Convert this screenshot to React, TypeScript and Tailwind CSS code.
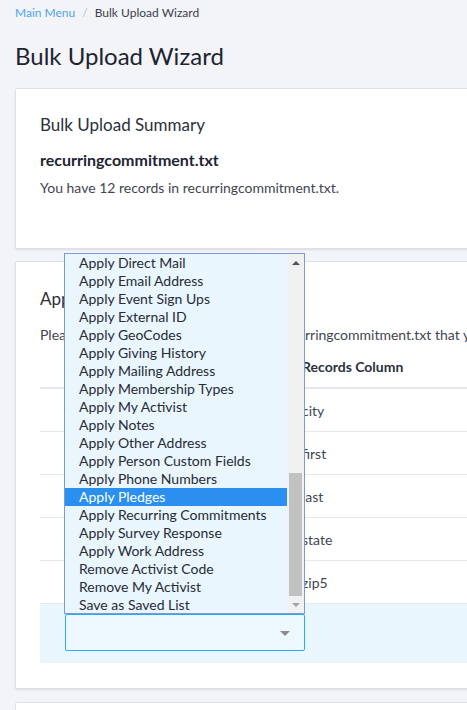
import React from "react";

const items = [
  "Apply Direct Mail",
  "Apply Email Address",
  "Apply Event Sign Ups",
  "Apply External ID",
  "Apply GeoCodes",
  "Apply Giving History",
  "Apply Mailing Address",
  "Apply Membership Types",
  "Apply My Activist",
  "Apply Notes",
  "Apply Other Address",
  "Apply Person Custom Fields",
  "Apply Phone Numbers",
  "Apply Pledges",
  "Apply Recurring Commitments",
  "Apply Survey Response",
  "Apply Work Address",
  "Remove Activist Code",
  "Remove My Activist",
  "Save as Saved List",
];

const rows = [
  { a: "City", b: "city" },
  { a: "First Name", b: "first" },
  { a: "Last Name", b: "last" },
  { a: "State", b: "state" },
  { a: "Zip", b: "zip5" },
];

export default function App() {
  return (
    <div
      className="relative w-[467px] h-[710px] overflow-hidden bg-[#f3f4f8] text-[#2f3542]"
      style={{ fontFamily: "Lato, 'Noto Sans', sans-serif" }}
    >
      {/* Breadcrumb */}
      <div className="flex items-center h-[26px] px-[15px] text-[12px]">
        <span className="text-[#4ba4ec]">Main Menu</span>
        <span className="mx-[7px] text-[#b9bec7]">/</span>
        <span className="text-[#3a404b]">Bulk Upload Wizard</span>
      </div>

      {/* Title */}
      <h1 className="px-[15px] mt-[14px] h-[32px] leading-[32px] text-[24px] text-[#1e2431] font-normal">
        Bulk Upload Wizard
      </h1>

      {/* Card 1 */}
      <div className="ml-[15px] mt-[16px] w-[600px] h-[161px] bg-white border border-[#dde2ea] rounded-[2px] shadow-[0_1px_2px_rgba(30,40,60,0.12)] px-[24px] pt-[24px]">
        <div className="text-[17px] leading-[24px] text-[#2b303b]">Bulk Upload Summary</div>
        <div className="mt-[13px] text-[16px] leading-[20px] font-bold text-[#1e2431]">
          recurringcommitment.txt
        </div>
        <div className="mt-[8px] text-[14px] leading-[20px] text-[#3f4551]">
          You have 12 records in recurringcommitment.txt.
        </div>
      </div>

      {/* Card 2 */}
      <div className="ml-[15px] mt-[12px] w-[600px] h-[428px] bg-white border border-[#dde2ea] rounded-[2px] shadow-[0_1px_2px_rgba(30,40,60,0.12)] px-[24px] pt-[25px]">
        <div className="text-[17px] leading-[24px] text-[#2b303b]">Apply Actions</div>
        <div className="mt-[14px] text-[14px] leading-[20px] text-[#3f4551] whitespace-nowrap">
          Please choose the action(s) to apply to recurringcommitment.txt that you uploaded.
        </div>
        <div className="mt-[1px] flex flex-col">
          <div className="flex h-[43px] items-center border-b-2 border-[#e5e8ed] text-[14px] font-bold text-[#2b303b]">
            <div className="w-[262px] pl-[40px]">Action</div>
            <div>Records Column</div>
          </div>
          {rows.map((r) => (
            <div
              key={r.b}
              className="flex h-[43px] items-center border-b border-[#e5e8ed] text-[14px] text-[#3f4551]"
            >
              <div className="w-[262px] pl-[40px]">{r.a}</div>
              <div>{r.b}</div>
            </div>
          ))}
          <div className="h-[59px] bg-[#eaf6fe] pt-[10px] pl-[25px]">
            <div className="relative w-[240px] h-[37px] border border-[#2aa8f4] bg-[#ecf7ff] rounded-[2px]">
              <svg
                className="absolute right-[14px] top-[16px]"
                width="10"
                height="5"
                viewBox="0 0 10 5"
              >
                <path d="M0 0 L10 0 L5 5 Z" fill="#8c8c8c" />
              </svg>
            </div>
          </div>
        </div>
      </div>

      {/* Card 3 */}
      <div className="ml-[15px] mt-[13px] w-[600px] h-[60px] bg-white border border-[#dde2ea] rounded-[2px]" />

      {/* Open dropdown list overlay */}
      <div className="absolute left-[64px] top-[253px] w-[241px] h-[361px] border border-[#7b9bd4] bg-[#eaf6fe] flex">
        <div className="flex-1 flex flex-col">
          {items.map((it) => (
            <div
              key={it}
              className={
                it === "Apply Pledges"
                  ? "h-[18px] leading-[18px] pl-[14px] text-[14px] bg-[#2b8ff0] text-white whitespace-nowrap"
                  : "h-[18px] leading-[18px] pl-[14px] text-[14px] text-[#262b36] whitespace-nowrap"
              }
            >
              {it}
            </div>
          ))}
        </div>
        <div className="w-[17px] bg-[#f1f1f1] flex flex-col">
          <div className="h-[17px] flex items-center justify-center">
            <svg width="8" height="4" viewBox="0 0 8 4">
              <path d="M0 4 L8 4 L4 0 Z" fill="#505050" />
            </svg>
          </div>
          <div className="flex-1 flex flex-col justify-end px-[2px]">
            <div className="h-[123px] bg-[#c1c1c1]" />
          </div>
          <div className="h-[17px] flex items-center justify-center">
            <svg width="8" height="4" viewBox="0 0 8 4">
              <path d="M0 0 L8 0 L4 4 Z" fill="#a3a3a3" />
            </svg>
          </div>
        </div>
      </div>
    </div>
  );
}
